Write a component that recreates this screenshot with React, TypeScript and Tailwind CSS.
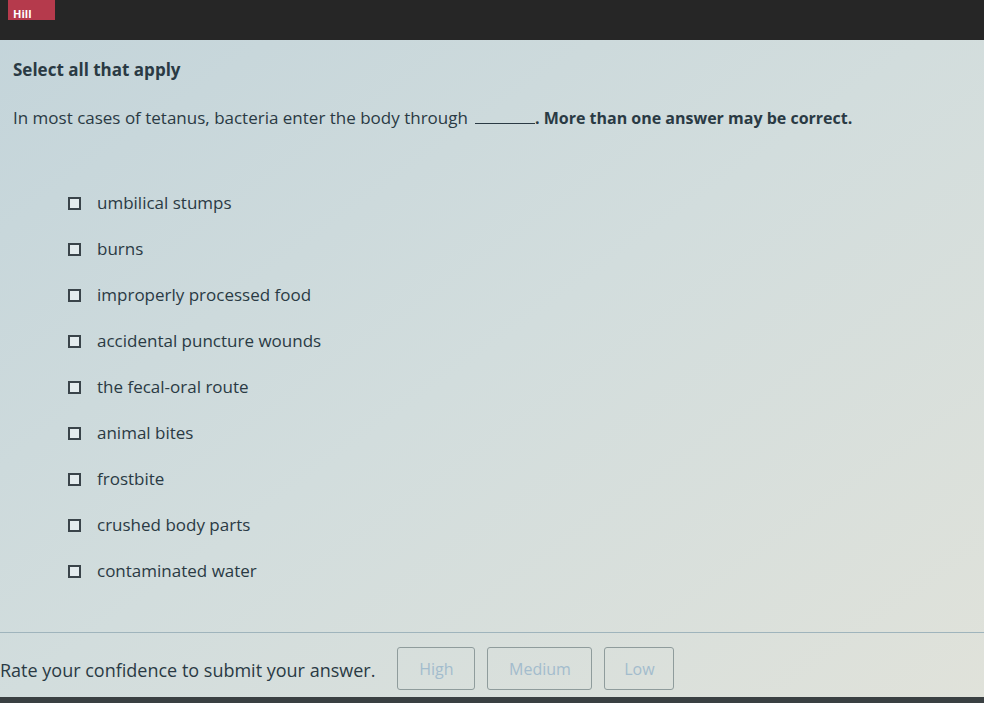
export default function App() {
  const options = [
    "umbilical stumps",
    "burns",
    "improperly processed food",
    "accidental puncture wounds",
    "the fecal-oral route",
    "animal bites",
    "frostbite",
    "crushed body parts",
    "contaminated water",
  ];

  return (
    <div
      className="w-[984px] h-[703px] overflow-hidden flex flex-col bg-gradient-to-br from-[#c3d4da] via-[#d2dddd] to-[#e0e2da] text-[#2a3a44]"
      style={{ fontFamily: "'Open Sans', Lato, sans-serif" }}
    >
      {/* top bar */}
      <header className="h-[40px] shrink-0 bg-[#262626] px-[8px] flex items-start">
        <div className="w-[47px] h-[20px] bg-[#b53a4c] flex items-end px-[5px] pb-[1px]">
          <span className="text-white text-[11px] font-bold leading-none">Hill</span>
        </div>
      </header>

      <main className="flex-1 flex flex-col px-[13px] pt-[17px]">
        <h2 className="text-[17px] font-bold">Select all that apply</h2>

        <p className="mt-[22px] text-[17px] flex items-baseline">
          <span>In most cases of tetanus, bacteria enter the body through</span>
          <span className="inline-block w-[60px] border-b border-[#2a3a44] ml-[7px]"></span>
          <span className="text-[16px] font-bold">. More than one answer may be correct.</span>
        </p>

        <ul className="mt-[61px] ml-[55px] flex flex-col gap-[22px]">
          {options.map((o) => (
            <li key={o} className="flex items-center gap-[16px] text-[17px] leading-[24px]">
              <span className="w-[13px] h-[13px] border-2 border-[#3a444a] bg-[#e4ecee]"></span>
              <span>{o}</span>
            </li>
          ))}
        </ul>

        <div className="mt-auto border-t border-[#9fb4bc] -mx-[13px]"></div>

        <div className="flex items-center gap-[12px] pt-[14px] pb-[7px] -ml-[13px]">
          <span className="text-[18px] mr-[10px] pt-[4px]">Rate your confidence to submit your answer.</span>
          <button className="w-[78px] h-[43px] border border-[#8f9c9c] rounded-[3px] text-[#a3bccd] text-[16px]">
            High
          </button>
          <button className="w-[105px] h-[43px] border border-[#8f9c9c] rounded-[3px] text-[#a3bccd] text-[16px]">
            Medium
          </button>
          <button className="w-[70px] h-[43px] border border-[#8f9c9c] rounded-[3px] text-[#a3bccd] text-[16px]">
            Low
          </button>
        </div>
      </main>
      <div className="h-[6px] shrink-0 bg-[#3a4042]"></div>
    </div>
  );
}
